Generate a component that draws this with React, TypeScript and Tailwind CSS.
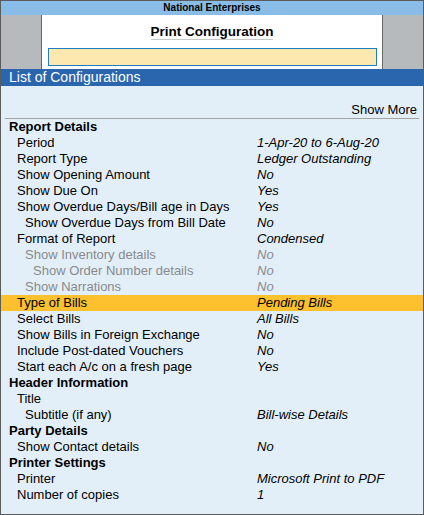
import React from 'react';

type Row = {
  label: string;
  value?: string;
  level: 0 | 1 | 2 | 3;
  muted?: boolean;
  active?: boolean;
};

const rows: Row[] = [
  { label: 'Report Details', level: 0 },
  { label: 'Period', value: '1-Apr-20 to 6-Aug-20', level: 1 },
  { label: 'Report Type', value: 'Ledger Outstanding', level: 1 },
  { label: 'Show Opening Amount', value: 'No', level: 1 },
  { label: 'Show Due On', value: 'Yes', level: 1 },
  { label: 'Show Overdue Days/Bill age in Days', value: 'Yes', level: 1 },
  { label: 'Show Overdue Days from Bill Date', value: 'No', level: 2 },
  { label: 'Format of Report', value: 'Condensed', level: 1 },
  { label: 'Show Inventory details', value: 'No', level: 2, muted: true },
  { label: 'Show Order Number details', value: 'No', level: 3, muted: true },
  { label: 'Show Narrations', value: 'No', level: 2, muted: true },
  { label: 'Type of Bills', value: 'Pending Bills', level: 1, active: true },
  { label: 'Select Bills', value: 'All Bills', level: 1 },
  { label: 'Show Bills in Foreign Exchange', value: 'No', level: 1 },
  { label: 'Include Post-dated Vouchers', value: 'No', level: 1 },
  { label: 'Start each A/c on a fresh page', value: 'Yes', level: 1 },
  { label: 'Header Information', level: 0 },
  { label: 'Title', level: 1 },
  { label: 'Subtitle (if any)', value: 'Bill-wise Details', level: 2 },
  { label: 'Party Details', level: 0 },
  { label: 'Show Contact details', value: 'No', level: 1 },
  { label: 'Printer Settings', level: 0 },
  { label: 'Printer', value: 'Microsoft Print to PDF', level: 1 },
  { label: 'Number of copies', value: '1', level: 1 },
];

const indent = ['pl-[8px]', 'pl-[16px]', 'pl-[24px]', 'pl-[32px]'];

const ConfigRow: React.FC<{ row: Row }> = ({ row }) => {
  const isHeader = row.level === 0;
  return (
    <div className={`flex h-[16px] items-center leading-[16px] ${row.active ? 'bg-[#fdc02f]' : ''}`}>
      <div className={`w-[256px] shrink-0 whitespace-nowrap ${indent[row.level]} ${isHeader ? 'font-bold' : ''} ${row.muted ? 'text-[#8a8a8a]' : 'text-black'}`}>
        {row.label}
      </div>
      {row.value && (
        <div className={`italic whitespace-nowrap ${row.muted ? 'text-[#8a8a8a]' : 'text-black'}`}>{row.value}</div>
      )}
    </div>
  );
};

export default function App() {
  return (
    <div className="w-[424px] h-[515px] border border-[#5b5b5b] flex flex-col bg-[#e2eff9] font-['Liberation_Sans',Arial,sans-serif] text-[13px] overflow-hidden">
      {/* Company bar */}
      <div className="h-[14px] bg-[#89bce6] flex items-center justify-center text-[10px] font-bold leading-none text-black">
        National Enterprises
      </div>

      {/* Title panel */}
      <div className="h-[54px] flex bg-[#b7babd]">
        <div className="w-[41px] border-r border-[#6a6a6a]" />
        <div className="flex-1 bg-white flex flex-col items-center">
          <div className="mt-[8px] h-[17px] leading-[17px] font-bold text-[13.5px] text-black border-b border-[#c8c8c8]">
            Print Configuration
          </div>
          <div className="mt-[8px] self-stretch ml-[6px] mr-[5px] h-[18px] bg-[#fde8b0] border border-[#1f7dc4]" />
        </div>
        <div className="w-[41px] border-l border-[#6a6a6a]" />
      </div>

      {/* List header */}
      <div className="h-[17px] bg-[#2a66ae] text-white text-[14px] leading-[17px] pl-[8px]">
        List of Configurations
      </div>

      {/* Body */}
      <div className="flex-1 flex flex-col">
        <div className="mt-[16px] h-[16px] leading-[16px] text-right pr-[6px] text-black">Show More</div>
        <div className="mx-[4px] border-b border-[#a3a3a3]" />
        <div className="flex flex-col">
          {rows.map(row => (
            <ConfigRow key={row.label} row={row} />
          ))}
        </div>
      </div>
    </div>
  );
}
